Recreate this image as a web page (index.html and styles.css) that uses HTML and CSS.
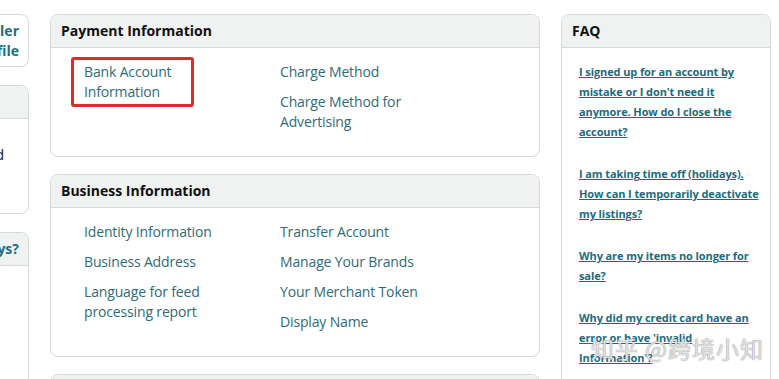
FILE: index.html
```
<!DOCTYPE html>
<html lang="en">
<head>
    <meta charset="UTF-8">
    <meta name="viewport" content="width=device-width, initial-scale=1.0">
    <title>Account Info</title>
    <link rel="stylesheet" href="styles.css">
</head>

<body>

<div class="page">
    <aside class="side-column">
        <div class="card short-card">
            <a class="side-link">Seller<br>Profile</a>
        </div>
        <div class="card">
            <div class="card-header"></div>
            <div class="side-body">Review and</div>
        </div>
        <div class="card tall-card">
            <div class="card-header side-header">On holidays?</div>
        </div>
    </aside>

    <main class="main-column">
        <section class="card">
            <div class="card-header">Payment Information</div>
            <div class="link-grid">
                <div class="link-col">
                    <a class="link marked">Bank Account<br>Information<span class="mark-box"></span></a>
                </div>
                <div class="link-col">
                    <a class="link">Charge Method</a>
                    <a class="link">Charge Method for<br>Advertising</a>
                </div>
            </div>
        </section>

        <section class="card">
            <div class="card-header">Business Information</div>
            <div class="link-grid">
                <div class="link-col">
                    <a class="link">Identity Information</a>
                    <a class="link">Business Address</a>
                    <a class="link">Language for feed<br>processing report</a>
                </div>
                <div class="link-col">
                    <a class="link">Transfer Account</a>
                    <a class="link">Manage Your Brands</a>
                    <a class="link">Your Merchant Token</a>
                    <a class="link">Display Name</a>
                </div>
            </div>
        </section>

        <section class="card tall-card">
            <div class="card-header">Shipping and Returns Information</div>
        </section>
    </main>

    <aside class="faq-column">
        <section class="card faq-card">
            <div class="card-header">FAQ</div>
            <div class="faq-body">
                <a class="faq-link">I signed up for an account by mistake or I don't need it anymore. How do I close the account?</a>
                <a class="faq-link">I am taking time off (holidays). How can I temporarily deactivate my listings?</a>
                <a class="faq-link">Why are my items no longer for sale?</a>
                <a class="faq-link">Why did my credit card have an error or have 'invalid Information'?</a>
            </div>
        </section>
    </aside>
</div>

<div class="watermark">知乎 @跨境小知</div>

</body>
</html>
```

FILE: styles.css
```
/* General Styles */
body {
    font-family: "Open Sans", Arial, sans-serif;
    margin: 0;
    padding: 0;
    background-color: #ffffff;
    color: #0f1111;
    overflow: hidden;
}

.page {
    display: flex;
    align-items: flex-start;
    gap: 21px;
    padding-top: 14px;
}

.card {
    border: 1px solid #d5d9d9;
    border-radius: 8px;
    background-color: #fff;
    overflow: hidden;
}

.card-header {
    height: 32px;
    line-height: 32px;
    background-color: #f0f2f2;
    border-bottom: 1px solid #d5d9d9;
    padding: 0 10px;
    font-size: 14px;
    font-weight: 700;
    white-space: nowrap;
}

.tall-card {
    height: 200px;
}

/* Left column (cut off by the window) */
.side-column {
    width: 180px;
    margin-left: -151px;
    flex-shrink: 0;
    display: flex;
    flex-direction: column;
    gap: 18px;
}

.short-card {
    height: 51px;
    display: flex;
    align-items: center;
    justify-content: flex-end;
    padding-right: 9px;
}

.side-link {
    color: #1c6f80;
    font-weight: 700;
    font-size: 14px;
    line-height: 20px;
    text-align: right;
}

.side-body {
    height: 94px;
    font-size: 14px;
    text-align: right;
    white-space: nowrap;
    padding: 26px 24px 0 0;
    box-sizing: border-box;
}

.side-header {
    color: #1c6f80;
    text-align: right;
    padding-right: 9px;
}

/* Middle column */
.main-column {
    width: 490px;
    flex-shrink: 0;
    display: flex;
    flex-direction: column;
    gap: 17px;
}

.link-grid {
    display: grid;
    grid-template-columns: 196px 196px;
    padding: 14px 0 24px 33px;
}

.link-col {
    display: flex;
    flex-direction: column;
    gap: 10px;
}

.link {
    color: #2f6b78;
    font-size: 14px;
    line-height: 20px;
    letter-spacing: -0.15px;
}

.marked {
    position: relative;
}

.mark-box {
    position: absolute;
    left: -13px;
    top: -5px;
    width: 123px;
    height: 50px;
    border: 3px solid #dd2c2c;
    border-radius: 3px;
    box-sizing: border-box;
}

/* FAQ column */
.faq-column {
    width: 210px;
    flex-shrink: 0;
}

.faq-card {
    height: 380px;
}

.faq-body {
    display: flex;
    flex-direction: column;
    gap: 22px;
    padding: 14px 4px 0 17px;
}

.faq-link {
    color: #1b6b7e;
    font-size: 11px;
    font-weight: 700;
    line-height: 20px;
    letter-spacing: -0.1px;
    text-decoration: underline;
}

.watermark {
    position: absolute;
    left: 591px;
    top: 331px;
    font-family: "Noto Sans CJK SC", sans-serif;
    font-size: 23px;
    color: rgba(255, 255, 255, 0.7);
    text-shadow: 0 0 1px #999, 0 0 1px #999;
    letter-spacing: 1px;
}
```
